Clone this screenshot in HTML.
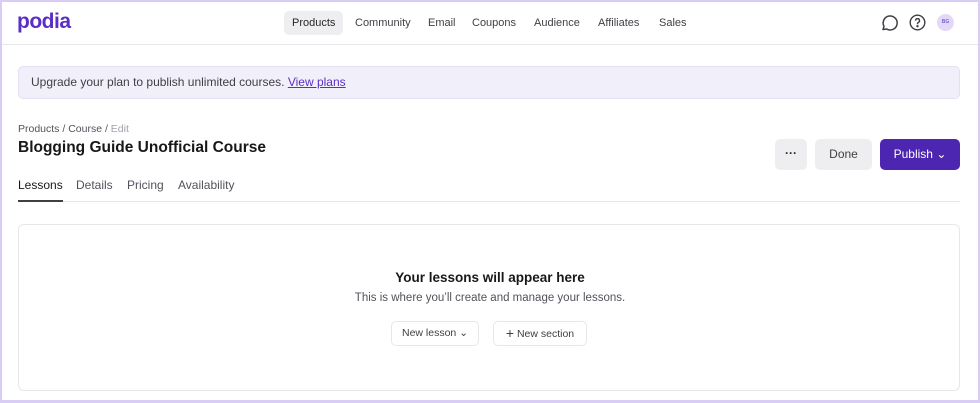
<!DOCTYPE html>
<html><head><style>
*{box-sizing:border-box;margin:0;padding:0}
body{width:980px;height:403px;overflow:hidden;background:#fff;font-family:"Liberation Sans",sans-serif;color:#1f2937;position:relative}
.frame{position:absolute;inset:0;border:2px solid #d9cdf5;border-bottom:3px solid #d9cdf5}
.abs{position:absolute}
.nav a{position:absolute;top:11px;height:24px;line-height:24px;font-size:11px;color:#3f3f46;padding:0 8px;border-radius:5px}
</style></head><body>
<div class="abs" style="left:17px;top:10px;font-size:21px;font-weight:bold;color:#5b2ec4;letter-spacing:-0.5px">podia</div>
<div class="nav">
<a style="left:284px;width:59px;background:#eeeef0;color:#27272a">Products</a>
<a style="left:347px">Community</a>
<a style="left:420px">Email</a>
<a style="left:464px">Coupons</a>
<a style="left:526px">Audience</a>
<a style="left:590px">Affiliates</a>
<a style="left:651px">Sales</a>
</div>
<svg class="abs" style="left:880px;top:14px" width="18" height="18" viewBox="0 0 18 18" fill="none" stroke="#3f3f46" stroke-width="1.5"><path d="M3 15.5l1-3.2A7 7 0 1 1 6.6 15z" stroke-linejoin="round"/></svg>
<svg class="abs" style="left:909px;top:14px" width="17" height="17" viewBox="0 0 17 17" fill="none" stroke="#3f3f46" stroke-width="1.4"><circle cx="8.5" cy="8.5" r="7.3"/><path d="M6.5 6.6a2 2 0 1 1 2.7 1.9c-.5.2-.7.6-.7 1.2v.6"/><circle cx="8.5" cy="12.2" r=".5" fill="#3f3f46"/></svg>
<div class="abs" style="left:937px;top:14px;width:17px;height:17px;border-radius:50%;background:#e2d9f7;color:#7c5bd0;font-size:5px;font-weight:bold;text-align:center;line-height:17px">BG</div>
<div class="abs" style="left:2px;right:2px;top:44px;height:1px;background:#e5e7eb"></div>
<div class="abs" style="left:18px;top:66px;width:942px;height:33px;background:#f1effa;border:1px solid #e4e0f3;border-radius:5px;font-size:12px;line-height:31px;padding-left:12px;color:#3f3f46">Upgrade your plan to publish unlimited courses. <span style="color:#5b2ec4;text-decoration:underline">View plans</span></div>
<div class="abs" style="left:18px;top:123px;font-size:10.5px;color:#52525b">Products / Course / <span style="color:#a1a1aa">Edit</span></div>
<div class="abs" style="left:18px;top:139px;font-size:15.5px;font-weight:bold;color:#18181b">Blogging Guide Unofficial Course</div>
<div class="abs" style="left:775px;top:139px;width:32px;height:31px;background:#eeeef0;border-radius:5px;text-align:center;line-height:28px;font-size:12px;font-weight:bold">···</div>
<div class="abs" style="left:815px;top:139px;width:57px;height:31px;background:#eeeef0;border-radius:5px;text-align:center;line-height:31px;font-size:12px;color:#3f3f46">Done</div>
<div class="abs" style="left:880px;top:139px;width:80px;height:31px;background:#4c25b0;border-radius:5px;text-align:center;line-height:31px;font-size:12px;color:#fff">Publish ⌄</div>
<div class="abs" style="left:18px;top:178px;font-size:12px;color:#18181b">Lessons</div>
<div class="abs" style="left:76px;top:178px;font-size:12px;color:#52525b">Details</div>
<div class="abs" style="left:127px;top:178px;font-size:12px;color:#52525b">Pricing</div>
<div class="abs" style="left:178px;top:178px;font-size:12px;color:#52525b">Availability</div>
<div class="abs" style="left:18px;top:201px;width:942px;height:1px;background:#e5e7eb"></div>
<div class="abs" style="left:18px;top:200px;width:45px;height:2px;background:#3f3f46"></div>
<div class="abs" style="left:18px;top:224px;width:942px;height:167px;border:1px solid #e5e7eb;border-radius:6px"></div>
<div class="abs" style="left:0;width:980px;top:270px;text-align:center;font-size:13.5px;font-weight:bold;color:#18181b">Your lessons will appear here</div>
<div class="abs" style="left:0;width:980px;top:292px;text-align:center;font-size:11.5px;color:#52525b">This is where you’ll create and manage your lessons.</div>
<div class="abs" style="left:391px;top:321px;width:88px;height:25px;border:1px solid #e5e7eb;border-radius:5px;font-size:10.5px;line-height:23px;text-align:center;color:#3f3f46">New lesson ⌄</div>
<div class="abs" style="left:493px;top:321px;width:94px;height:25px;border:1px solid #e5e7eb;border-radius:5px;font-size:10.5px;line-height:23px;text-align:center;color:#3f3f46"><span style="font-size:14px;vertical-align:-1px">+</span> New section</div>
<div class="frame"></div>
</body></html>
